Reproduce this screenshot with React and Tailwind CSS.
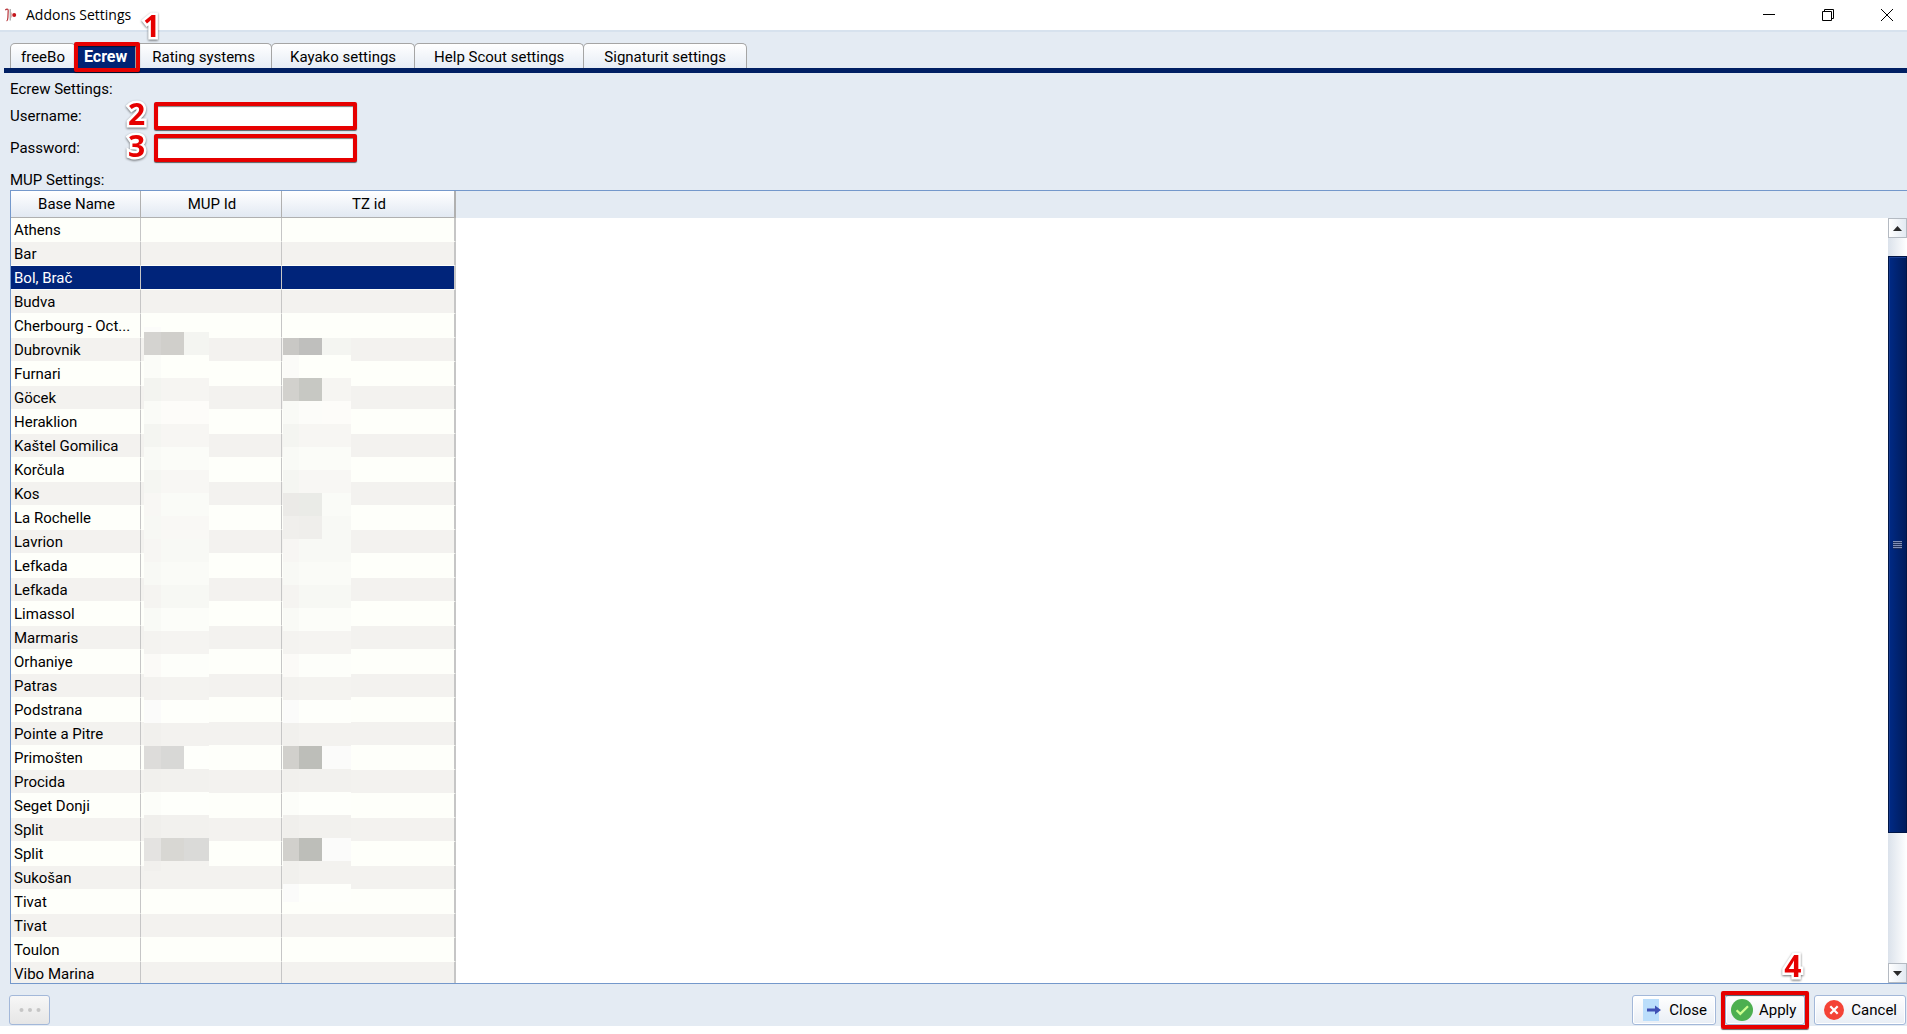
import React, { useState } from 'react';

const tabs = [
  { label: 'freeBo', pad: 'px-[10px]' },
  { label: 'Ecrew', pad: 'px-2' },
  { label: 'Rating systems', pad: 'px-4' },
  { label: 'Kayako settings', pad: 'px-[18px]' },
  { label: 'Help Scout settings', pad: 'px-[19px]' },
  { label: 'Signaturit settings', pad: 'px-5' },
];

const bases = [
  'Athens', 'Bar', 'Bol, Brač', 'Budva', 'Cherbourg - Oct...', 'Dubrovnik', 'Furnari', 'Göcek',
  'Heraklion', 'Kaštel Gomilica', 'Korčula', 'Kos', 'La Rochelle', 'Lavrion', 'Lefkada', 'Lefkada',
  'Limassol', 'Marmaris', 'Orhaniye', 'Patras', 'Podstrana', 'Pointe a Pitre', 'Primošten', 'Procida',
  'Seget Donji', 'Split', 'Split', 'Sukošan', 'Tivat', 'Tivat', 'Toulon', 'Vibo Marina',
];

// Censored values: [y, height, first, second, third block colour]
const mupMosaic = [
  [0, 5, '#fcfcfa', '#fefffa', '#fefffa'],
  [5, 23, '#d4d3d0', '#d0cfcb', '#f4f5f1'],
  [28, 23, '#fbfcf8', '#fefffa', '#fefffa'],
  [51, 23, '#f3f4f0', '#f6f5f2', '#f6f5f2'],
  [74, 23, '#fafbf7', '#fdfcf9', '#fdfcf9'],
  [97, 23, '#f4f5f1', '#f7f6f3', '#f7f6f3'],
  [120, 23, '#f9faf6', '#fbfcf8', '#fbfcf8'],
  [143, 23, '#f5f6f2', '#f8f7f4', '#f8f7f4'],
  [166, 23, '#f8f7f4', '#fafbf7', '#fafbf7'],
  [189, 23, '#f7f8f4', '#f9f8f5', '#f9f8f5'],
  [212, 23, '#f7f6f3', '#f8f9f5', '#f8f9f5'],
  [235, 23, '#f8f9f5', '#fafbf7', '#fafbf7'],
  [258, 23, '#f5f4f1', '#f7f8f4', '#f7f8f4'],
  [281, 23, '#f9faf6', '#fcfdf9', '#fcfdf9'],
  [304, 23, '#f4f3f0', '#f5f4f1', '#f5f4f1'],
  [327, 23, '#fbfaf7', '#fdfefa', '#fdfefa'],
  [350, 23, '#f3f2ef', '#f4f3f0', '#f4f3f0'],
  [373, 23, '#fbfbfa', '#fefffb', '#fefffb'],
  [396, 23, '#f1f0ed', '#f3f2ef', '#f3f2ef'],
  [419, 23, '#dddcda', '#d8d8d6', '#fefffb'],
  [442, 23, '#f1f0ed', '#f2f1ee', '#f2f1ee'],
  [465, 23, '#fcfdf9', '#fefffb', '#fefffb'],
  [488, 23, '#f0efec', '#f2f1ee', '#f2f1ee'],
  [511, 23, '#e4e3e1', '#d8d7d3', '#dadad8'],
  [534, 10, '#f1f0ed', '#f3f2ef', '#f3f2ef'],
];

const tzMosaic = [
  [11, 17, '#c9c8c5', '#bfbfbd', '#f4f5f1'],
  [28, 23, '#fbfbf8', '#fefffa', '#fefffa'],
  [51, 23, '#d2d1cd', '#c7c8c3', '#f6f5f2'],
  [74, 23, '#f9faf6', '#fcfcf9', '#fdfcf9'],
  [97, 23, '#f4f5f1', '#f7f6f3', '#f7f6f3'],
  [120, 23, '#f9faf6', '#fbfcf8', '#fbfcf8'],
  [143, 23, '#f5f6f2', '#f8f7f4', '#f8f7f4'],
  [166, 23, '#ebeae7', '#eaebe7', '#fafbf7'],
  [189, 23, '#f0efec', '#efeeeb', '#f8f9f5'],
  [212, 23, '#f7f6f3', '#f8f9f5', '#f8f9f5'],
  ...mupMosaic.slice(11, 19),
  [419, 23, '#d1d0cc', '#bdbeb9', '#fbfbfa'],
  ...mupMosaic.slice(20, 23),
  [511, 23, '#d1d0cc', '#bdbeb9', '#fbfbfa'],
  [534, 23, '#f1f0ed', '#f3f2ef', '#f3f2ef'],
  [557, 18, '#fbfbfa', '#fefffb', '#fefffb'],
];

const Mosaic = ({ rows, cuts, className }) => (
  <svg width={cuts[3]} height="576" className={className} shapeRendering="crispEdges" aria-hidden="true">
    {rows.map(([y, h, ...fills]) =>
      fills.map((fill, i) => (
        <rect key={`${y}-${i}`} x={cuts[i]} y={y} width={cuts[i + 1] - cuts[i]} height={h} fill={fill} />
      ))
    )}
  </svg>
);

const Marker = ({ children, className }) => (
  <span
    className={`z-20 font-['Open_Sans',sans-serif] text-[30px] leading-[30px] font-bold text-[#e60000] pointer-events-none [-webkit-text-stroke:5px_white] [paint-order:stroke_fill] [filter:drop-shadow(0_1px_1px_rgb(0_0_0/0.55))] ${className}`}
  >
    {children}
  </span>
);

const Highlight = ({ className }) => (
  <span
    className={`absolute z-10 rounded-[2px] border-4 border-[#e60000] shadow-[0_1px_1px_rgb(0_0_0/0.6),inset_0_1px_1px_rgb(0_0_0/0.5)] pointer-events-none ${className}`}
    aria-hidden="true"
  />
);

const Field = ({ id, label, type, marker }) => (
  <div className="flex items-center h-7">
    <label htmlFor={id} className="w-[118px]">{label}</label>
    <Marker className="w-[26px] pb-1">{marker}</Marker>
    <input
      id={id}
      type={type}
      className="w-[203px] h-full px-1 rounded-[2px] bg-white border-4 border-[#e60000] outline-none shadow-[0_1px_1px_rgb(0_0_0/0.6),inset_0_1px_1px_rgb(0_0_0/0.5)]"
    />
  </div>
);

const buttonStyle =
  'relative flex items-center h-[30px] rounded-[3px] border border-[#a3b8d9] bg-linear-to-b from-white to-[#e9eef5] shadow-[inset_0_0_0_1px_white]';

const ScrollButton = ({ label, path }) => (
  <button
    type="button"
    aria-label={label}
    className="shrink-0 h-5 w-full flex items-center justify-center border border-[#b4bac2] bg-linear-to-r from-white to-[#e3eaf2]"
  >
    <svg width="9" height="5" viewBox="0 0 9 5" fill="#2b2b2b">
      <path d={path} />
    </svg>
  </button>
);

export default function App() {
  const [active, setActive] = useState('Ecrew');
  const [selected, setSelected] = useState(2);

  return (
    <div className="h-screen flex flex-col overflow-hidden bg-[#e4ebf3] font-[Roboto,sans-serif] text-[15px] leading-5 text-black">
      {/* Title bar */}
      <header className="relative shrink-0 h-8 flex items-center justify-between bg-white border-b-2 border-[#d7e2ee]">
        <div className="flex items-center gap-[9px] pl-[5px] font-['Open_Sans',sans-serif] text-sm">
          <svg width="12" height="14" viewBox="0 0 12 14" fill="none">
            <path d="M0.3 2.2C1.4 0.8 3.2 0.6 3.2 2.6L2.9 9.5C2.8 11.3 2.4 12.6 1.6 13" stroke="#b8343a" strokeWidth="1.2" />
            <path d="M5.2 1V12.5" stroke="#8f8f8f" strokeWidth="1" />
            <path d="M6.4 4.5V9.5" stroke="#d99a9c" strokeWidth="0.8" />
            <circle cx="9.2" cy="7" r="2" fill="#c4161c" />
          </svg>
          <h1>Addons Settings</h1>
        </div>
        <div className="flex items-center gap-[47px] pr-[14px]">
          <button type="button" aria-label="Minimize">
            <svg width="12" height="12" viewBox="0 0 12 12" className="block"><path d="M0 5.5H12" stroke="black" /></svg>
          </button>
          <button type="button" aria-label="Restore">
            <svg width="12" height="12" viewBox="0 0 12 12" fill="none" stroke="black" className="block">
              <path d="M0.5 2.5H9.5V11.5H0.5Z" />
              <path d="M2.5 2.5V0.5H11.5V9.5H9.5" />
            </svg>
          </button>
          <button type="button" aria-label="Close window">
            <svg width="12" height="12" viewBox="0 0 12 12" fill="none" stroke="black" className="block">
              <path d="M0 0L12 12M12 0L0 12" />
            </svg>
          </button>
        </div>
      </header>

      {/* Tabs */}
      <nav className="shrink-0 ml-1 mt-[11px] pl-[6px] flex border-b-5 border-[#001f63]" role="tablist">
        {tabs.map(({ label, pad }) => (
          <div key={label} className="relative -mr-px">
            <button
              type="button"
              role="tab"
              aria-selected={active === label}
              onClick={() => setActive(label)}
              className={`block h-[25px] pt-px rounded-t-[5px] border border-b-0 ${pad} ${
                active === label
                  ? 'bg-[#002374] border-[#001f63] text-white text-base leading-5 font-bold'
                  : 'bg-linear-to-b from-white to-[#e6ecf5] border-[#a5a5a5]'
              }`}
            >
              {label}
            </button>
            {label === 'Ecrew' && (
              <>
                <Highlight className="-left-px -right-1 -top-px -bottom-1" />
                <Marker className="absolute -right-6 -top-8">1</Marker>
              </>
            )}
          </div>
        ))}
      </nav>

      <main className="flex-1 min-h-0 flex flex-col pl-[10px] pt-[6px]">
        <h2>Ecrew Settings:</h2>
        <form className="mt-[3px] flex flex-col gap-1">
          <Field id="username" label="Username:" type="text" marker="2" />
          <Field id="password" label="Password:" type="password" marker="3" />
        </form>
        <h2 className="mt-2">MUP Settings:</h2>

        <section className="relative flex-1 min-h-0 flex overflow-hidden border border-r-0 border-[#7498cb] bg-[linear-gradient(#e4ebf3_27px,white_27px)]">
          <div className="relative flex-1 min-w-0 overflow-hidden">
            <table className="table-fixed w-[445px] border-separate border-spacing-0">
              <colgroup>
                <col className="w-[130px]" />
                <col className="w-[141px]" />
                <col />
              </colgroup>
              <thead>
                <tr>
                  {['Base Name', 'MUP Id', 'TZ id'].map((name) => (
                    <th
                      key={name}
                      className="h-[27px] py-0 pl-[2px] pr-0 font-normal border-b border-r last:border-r-2 border-[#b0b0b0] bg-linear-to-b from-white to-[#e2e9f2]"
                    >
                      {name}
                    </th>
                  ))}
                </tr>
              </thead>
              <tbody>
                {bases.map((base, i) => {
                  const fill = i === selected ? 'bg-[#00247a] text-white' : i % 2 ? 'bg-[#f3f2ef]' : 'bg-[#fefffa]';
                  const cell = `h-6 py-0 border-r border-b border-r-[#c6c6c6] border-b-[#fefffa] bg-clip-padding ${fill}`;
                  return (
                    <tr key={i} onClick={() => setSelected(i)}>
                      <td className={`${cell} pl-[3px] pr-1 truncate`}>{base}</td>
                      <td className={cell} />
                      <td className={`${cell} border-r-2`} />
                    </tr>
                  );
                })}
              </tbody>
            </table>
            <Mosaic rows={mupMosaic} cuts={[0, 17, 40, 65]} className="absolute left-[133px] top-[136px]" />
            <Mosaic rows={tzMosaic} cuts={[0, 16, 39, 68]} className="absolute left-[272px] top-[136px]" />
          </div>

          {/* Scrollbar */}
          <div className="shrink-0 w-[19px] mt-[27px] flex flex-col bg-linear-to-r from-[#dbe2eb] to-white">
            <ScrollButton label="Scroll up" path="M4.5 0L9 5H0Z" />
            <div className="flex-1 min-h-0 flex flex-col pt-[18px]">
              <div className="flex-31 flex items-center justify-center border border-[#001546] bg-linear-to-r from-[#002a86] to-[#001c5c] shadow-[inset_1px_1px_0_#1a3f94]">
                <svg width="9" height="8" viewBox="0 0 9 8" shapeRendering="crispEdges">
                  <path d="M0 .5H9M0 2.5H9M0 4.5H9M0 6.5H9" stroke="#7f8fb8" />
                  <path d="M0 1.5H9M0 3.5H9M0 5.5H9M0 7.5H9" stroke="#1d2f5c" />
                </svg>
              </div>
              <div className="flex-7" />
            </div>
            <ScrollButton label="Scroll down" path="M0 0H9L4.5 5Z" />
          </div>
        </section>
      </main>

      {/* Actions */}
      <footer className="shrink-0 flex items-center justify-between pl-[9px] pr-px pt-[11px] pb-px">
        <button
          type="button"
          disabled
          aria-label="More"
          className="w-[41px] h-[30px] flex items-center justify-center rounded-[3px] border border-[#a3b8d9] bg-linear-to-b from-[#f7f7f7] to-[#e6e6e6]"
        >
          <svg width="22" height="4" viewBox="0 0 22 4" fill="#c6c6c6">
            <circle cx="2.5" cy="2" r="2" />
            <circle cx="11" cy="2" r="2" />
            <circle cx="19.5" cy="2" r="2" />
          </svg>
        </button>
        <div className="flex gap-[9px]">
          <button type="button" className={`${buttonStyle} pl-[10px] pr-2 gap-2`}>
            <svg width="18" height="22" viewBox="0 0 18 22">
              <path d="M0 0H16V22H0Z" fill="#bbdefb" />
              <path d="M4 9.6H12V6.4L18 11L12 15.6V12.4H4Z" fill="#3f51b5" />
            </svg>
            Close
          </button>
          <div className="relative">
            <button type="button" className={`${buttonStyle} pl-[5px] pr-2 gap-[6px]`}>
              <svg width="22" height="22" viewBox="0 0 22 22" fill="none">
                <circle cx="11" cy="11" r="11" fill="#4caf50" />
                <path d="M5.6 11.2L9.3 14.9L17 7.2" stroke="#ccff90" strokeWidth="2.2" />
              </svg>
              Apply
            </button>
            <Highlight className="-inset-1" />
            <Marker className="absolute right-1 -top-11">4</Marker>
          </div>
          <button type="button" className={`${buttonStyle} pl-[9px] pr-2 gap-[7px]`}>
            <svg width="20" height="20" viewBox="0 0 20 20" fill="none">
              <circle cx="10" cy="10" r="10" fill="#f44336" />
              <path d="M6.3 6.3L13.7 13.7M13.7 6.3L6.3 13.7" stroke="white" strokeWidth="2.2" />
            </svg>
            Cancel
          </button>
        </div>
      </footer>
      <div className="shrink-0 h-2 bg-white" />
    </div>
  );
}
